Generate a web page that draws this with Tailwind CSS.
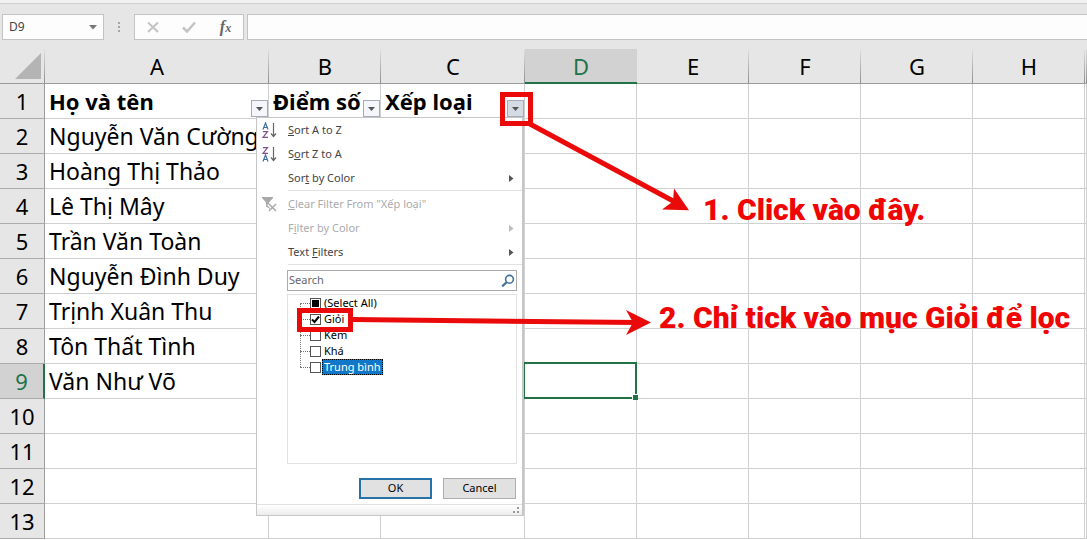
<!DOCTYPE html>
<html lang="vi">
<head>
  <meta charset="UTF-8">
  <meta name="viewport" content="width=device-width, initial-scale=1.0">
  <title>Excel - Lọc dữ liệu</title>
  <script src="https://cdn.jsdelivr.net/npm/@tailwindcss/browser@4"></script>
</head>
<body class="relative min-h-screen overflow-x-hidden bg-white font-['Noto_Sans','Open_Sans',sans-serif] text-black">

  <!-- Formula bar -->
  <div class="h-1 border-b border-[#d0d0d0] bg-[#f1f1f1]"></div>
  <header class="flex h-[45px] items-start bg-[#e6e6e6] pt-[10px] pl-[2px]">
    <div class="flex h-[26px] w-[102px] items-center justify-between border border-[#c3c3c3] bg-[#fdfdfd] pr-[6px] pl-[6px]">
      <input type="text" aria-label="Name box" value="D9" class="w-16 text-[12px] text-[#444] outline-none">
      <svg class="h-[5px] w-[8px]" viewBox="0 0 8 5" fill="#777"><path d="M0 0h8L4 4.6z"/></svg>
    </div>
    <svg class="mx-[13px] h-[26px] w-[4px]" viewBox="0 0 4 26" fill="#a6a6a6"><path d="M1 8h2v2H1zM1 12h2v2H1zM1 16h2v2H1z"/></svg>
    <div class="flex h-[26px] w-[110px] items-center justify-around border border-[#c3c3c3] bg-[#fdfdfd]">
      <button type="button" aria-label="Cancel entry"><svg class="size-3" viewBox="0 0 12 12" fill="none" stroke="#c4c4c4" stroke-width="2"><path d="M1 1.500l10 9.500M11 1.500L1 11"/></svg></button>
      <button type="button" aria-label="Enter"><svg class="h-3 w-[14px]" viewBox="0 0 14 12" fill="none" stroke="#c4c4c4" stroke-width="2.600"><path d="M1 6.500l4 4L13 1.500"/></svg></button>
      <button type="button" class="font-['Liberation_Serif',serif] text-[16px] leading-5 font-bold text-[#666] italic">f<span class="text-[12px]">x</span></button>
    </div>
    <input type="text" aria-label="Formula" class="ml-[3px] h-[26px] min-w-0 grow border border-r-0 border-[#c3c3c3] bg-[#fdfdfd] px-2 text-sm outline-none">
  </header>

  <!-- Sheet -->
  <table class="w-full table-fixed border-separate border-spacing-0 bg-white text-[22px] leading-[30px]">
    <colgroup>
      <col class="w-[45px]"><col class="w-[224px]"><col class="w-[112px]"><col class="w-[144px]">
      <col class="w-[112px]"><col class="w-[112px]"><col class="w-[112px]"><col class="w-[112px]"><col class="w-[112px]"><col>
    </colgroup>
    <thead id="sheetHead"></thead>
    <tbody id="sheetBody"></tbody>
  </table>

  <!-- Filter menu -->
  <section class="absolute top-[117px] left-[256px] w-[268px] border border-r-2 border-[#c6c6c6] bg-white text-[11px] text-[#444]">
    <ul class="leading-6">
      <li><button type="button" class="flex h-6 w-full items-center">
        <svg class="mr-[10px] ml-[5px] size-4" viewBox="0 0 16 16"><g fill="none" stroke-width="1.200"><path stroke="#41719c" d="M1 7.500L3.500 1 6 7.500M2 5.500h3"/><path stroke="#80508f" d="M1 9.600h4.500L1 15.400h5"/><path stroke="#666" d="M11.500 1v13.500M9 11.500l2.500 3 2.500-3"/></g></svg>
        <span><u>S</u>ort A to Z</span></button></li>
      <li><button type="button" class="flex h-6 w-full items-center">
        <svg class="mr-[10px] ml-[5px] size-4" viewBox="0 0 16 16"><g fill="none" stroke-width="1.200"><path stroke="#80508f" d="M1 1.600h4.500L1 7.400h5"/><path stroke="#41719c" d="M1 15.500L3.500 9 6 15.500M2 13.500h3"/><path stroke="#666" d="M11.500 1v13.500M9 11.500l2.500 3 2.500-3"/></g></svg>
        <span>S<u>o</u>rt Z to A</span></button></li>
      <li><button type="button" class="flex h-6 w-full items-center justify-between pr-2 pl-[31px]">
        <span>Sor<u>t</u> by Color</span>
        <svg class="h-[7px] w-[5px]" viewBox="0 0 5 7" fill="#555"><path d="M0 0v7l4.500-3.500z"/></svg></button></li>
    </ul>
    <hr class="mb-px ml-[31px] border-[#e1e1e1]">
    <ul class="leading-6">
      <li><button type="button" disabled class="flex h-6 w-full items-center text-[#ababab]">
        <svg class="mr-[10px] ml-[5px] size-4" viewBox="0 0 16 16"><path fill="#a9a9a9" d="M0 1h11v1L7 6.500V8L5 9l3 3v1L4 10.500v-4L0 2z"/><path fill="none" stroke="#a9a9a9" stroke-width="1.500" d="M7 8l7 7M14 8l-7 7"/></svg>
        <span><u>C</u>lear Filter From "Xếp loại"</span></button></li>
      <li><button type="button" disabled class="flex h-6 w-full items-center justify-between pr-2 pl-[31px] text-[#ababab]">
        <span>F<u>i</u>lter by Color</span>
        <svg class="h-[7px] w-[5px]" viewBox="0 0 5 7" fill="#bbb"><path d="M0 0v7l4.500-3.500z"/></svg></button></li>
      <li><button type="button" class="flex h-6 w-full items-center justify-between pr-2 pl-[31px]">
        <span>Text <u>F</u>ilters</span>
        <svg class="h-[7px] w-[5px]" viewBox="0 0 5 7" fill="#555"><path d="M0 0v7l4.500-3.500z"/></svg></button></li>
    </ul>
    <hr class="ml-[31px] border-[#e1e1e1]">
    <div class="pr-[5px] pl-[30px]">
      <label class="mt-[5px] flex h-[21px] items-center border border-[#ababab] pr-px pl-px">
        <input type="text" placeholder="Search" aria-label="Search" class="min-w-0 grow outline-none placeholder:text-[#666]">
        <svg class="size-[14px]" viewBox="0 0 14 14" fill="none" stroke="#41719c"><circle cx="8.500" cy="5.300" r="3.900" stroke-width="1.600"/><path stroke-width="2.200" d="M5.600 8.200L1.200 12.400"/></svg>
      </label>
      <div class="relative mt-[3px] h-[170px] border border-[#e1e1e1] leading-4 text-black">
        <div class="absolute top-2 left-[12px] h-16 border-l border-dotted border-[#777]"></div>
        <ul id="filterList" class="pl-[12px]"></ul>
      </div>
      <div class="mt-[14px] mb-[5px] flex justify-end gap-[11px] pr-px text-black">
        <button type="button" class="h-[21px] w-[73px] border-2 border-[#2672a8] bg-[#e1e1e1]">OK</button>
        <button type="button" class="h-[21px] w-[73px] border border-[#adadad] bg-[#e1e1e1]">Cancel</button>
      </div>
    </div>
    <div class="flex h-[11px] items-end justify-end border-t border-[#e1e1e1] bg-gradient-to-b from-white to-[#ececec] pr-[3px] pb-[2px]">
      <svg class="size-[6px]" viewBox="0 0 6 6" fill="#999"><path d="M4 0h2v2H4zM0 4h2v2H0zM4 4h2v2H4z"/></svg>
    </div>
  </section>

  <!-- Guide marks -->
  <div class="absolute top-[92px] left-[500px] h-[34px] w-[33px] border-[5px] border-[#eb0a0a]"></div>
  <div class="absolute top-[308px] left-[297px] h-[24px] w-[56px] border-[5px] border-[#eb0a0a]"></div>
  <svg class="pointer-events-none absolute top-0 left-0 h-[400px] w-[700px]" viewBox="0 0 700 400" fill="#eb0a0a">
    <path stroke="#eb0a0a" stroke-width="5" d="M530 124L675 202M352 319.500L638 322.500"/>
    <path d="M689 210.300L674 188.500 673 201.500 662 209.500z"/>
    <path d="M651 322.500L626 310 633 322.500 626 335z"/>
  </svg>
  <p class="absolute top-[190px] left-[703px] font-[Roboto,sans-serif] text-[30px] leading-10 font-black whitespace-nowrap text-[#f00505]">1. Click vào đây.</p>
  <p class="absolute top-[298px] left-[659px] font-[Roboto,sans-serif] text-[30px] leading-10 font-black whitespace-nowrap text-[#f00505]">2. Chỉ tick vào mục Giỏi để lọc</p>

  <script>
    const columns = ['A', 'B', 'C', 'D', 'E', 'F', 'G', 'H', ''];
    const titles = ['Họ và tên', 'Điểm số', 'Xếp loại'];
    const names = ['Nguyễn Văn Cường', 'Hoàng Thị Thảo', 'Lê Thị Mây', 'Trần Văn Toàn', 'Nguyễn Đình Duy', 'Trịnh Xuân Thu', 'Tôn Thất Tình', 'Văn Như Võ'];
    const rowCount = 13;

    const headClass = (active) => active
      ? 'h-[35px] border-b-2 border-[#217346] bg-[#d2d2d2] p-0 font-normal text-[#217346]'
      : 'h-[35px] border-b border-[#9b9b9b] bg-[#e6e6e6] bg-[linear-gradient(#e0e0e0,#8f8f8f)] bg-[length:1px_100%] bg-right bg-no-repeat p-0 font-normal';

    const rowHeadClass = (active) => active
      ? 'h-[35px] border-r-2 border-b border-r-[#217346] border-b-[#ababab] bg-[#d2d2d2] p-0 font-normal text-[#217346]'
      : 'h-[35px] border-r border-b border-r-[#9b9b9b] border-b-[#ababab] bg-[#e6e6e6] p-0 font-normal';

    const filterButton = (i) => `
      <button type="button" aria-label="Filter" class="flex size-[17px] shrink-0 items-center justify-center border border-[#a5acb5] ${i === 2 ? 'bg-[#d5dbe5]' : 'bg-[#f4f6f9]'}">
        <svg class="h-1 w-[7px]" viewBox="0 0 7 4" fill="#555"><path d="M0 0h7L3.500 4z"/></svg>
      </button>`;

    // Column letters
    document.getElementById('sheetHead').innerHTML = `
      <tr>
        <th class="${headClass(false)}"><svg class="ml-[15px] h-[26px] w-[26px]" viewBox="0 0 26 26" fill="#b4b4b4"><path d="M26 0v26H0z"/></svg></th>
        ${columns.map((c) => `<th class="${headClass(c === 'D')}">${c}</th>`).join('')}
      </tr>`;

    // Cells
    const cell = (row, i) => {
      if (row === 1 && i < 3) {
        return `<td class="border-r border-b border-[#d0d0d0] p-0 pl-1 font-bold"><div class="flex h-[34px] items-end justify-between pb-px whitespace-nowrap"><span class="w-0 pb-px">${titles[i]}</span>${filterButton(i)}</div></td>`;
      }
      if (row === 9 && i === 3) {
        return `<td class="relative border-r border-b border-[#d0d0d0] p-0"><div class="absolute -inset-px -top-[2px] -left-[2px] border-2 border-[#217346]"></div><div class="absolute -right-[2px] -bottom-[2px] size-[6px] border-t border-l border-white bg-[#217346]"></div></td>`;
      }
      const text = i === 0 && row > 1 ? names[row - 2] || '' : '';
      return `<td class="border-r border-b border-[#d0d0d0] p-0 pl-1 text-[23px] whitespace-nowrap">${text}</td>`;
    };

    let rows = '';
    for (let row = 1; row <= rowCount; row++) {
      rows += `<tr><th class="${rowHeadClass(row === 9)}">${row}</th>${columns.map((c, i) => cell(row, i)).join('')}</tr>`;
    }
    document.getElementById('sheetBody').innerHTML = rows;

    // Filter values
    const values = ['(Select All)', 'Giỏi', 'Kém', 'Khá', 'Trung bình'];
    document.getElementById('filterList').innerHTML = values.map((v, i) => `
      <li><label class="flex h-4 items-center">
        <span class="w-[10px] border-t border-dotted border-[#777]"></span>
        <span class="relative flex size-[11px] items-center justify-center">
          <input type="checkbox" ${i === 1 ? 'checked' : ''} class="size-[11px] appearance-none border border-[#555] bg-white">
          ${i === 0 ? '<span class="absolute size-[7px] bg-black"></span>' : ''}
          ${i === 1 ? '<svg class="absolute size-[9px]" viewBox="0 0 9 9" fill="none" stroke="#000" stroke-width="2"><path d="M1 4.500l2.500 2.500L8 1.500"/></svg>' : ''}
        </span>
        <span class="${v === 'Trung bình' ? 'ml-px border border-dotted border-black bg-[#1177c8] px-px leading-[14px] text-white' : 'ml-[3px]'}">${v}</span>
      </label></li>`).join('');
  </script>
</body>
</html>
